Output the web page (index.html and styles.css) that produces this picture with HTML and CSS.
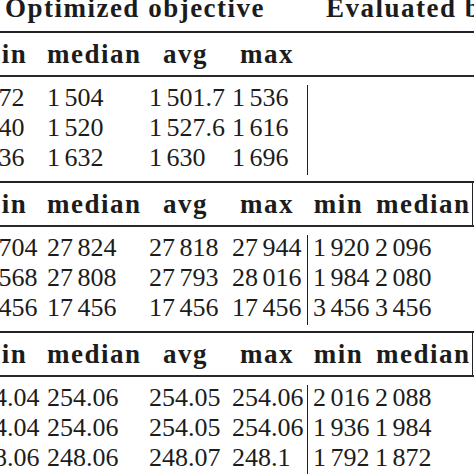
FILE: index.html
```html
<!DOCTYPE html>
<html>
<head>
<meta charset="utf-8">
<link rel="stylesheet" href="styles.css">
</head>
<body>
<div class="sheet">
  <div class="title-row">
    <div class="title left">Optimized objective</div>
    <div class="title right">Evaluated by simulation</div>
  </div>

  <div class="block">
    <div class="hdr">
      <div class="h">min</div><div class="h">median</div><div class="h">avg</div><div class="h">max</div>
      <div class="h"></div><div class="h"></div><div class="h"></div>
    </div>
    <div class="body">
      <div class="d">1 472</div><div class="d">1 504</div><div class="d">1 501.7</div><div class="d">1 536</div><div class="d sep"></div><div class="d"></div><div class="d"></div>
      <div class="d">1 440</div><div class="d">1 520</div><div class="d">1 527.6</div><div class="d">1 616</div><div class="d sep"></div><div class="d"></div><div class="d"></div>
      <div class="d">1 536</div><div class="d">1 632</div><div class="d">1 630</div><div class="d">1 696</div><div class="d sep"></div><div class="d"></div><div class="d"></div>
    </div>
  </div>

  <div class="block next">
    <div class="hdr">
      <div class="h">min</div><div class="h">median</div><div class="h">avg</div><div class="h">max</div>
      <div class="h">min</div><div class="h bar">median</div><div class="h"></div>
    </div>
    <div class="body">
      <div class="d">27 704</div><div class="d">27 824</div><div class="d">27 818</div><div class="d">27 944</div><div class="d sep">1 920</div><div class="d">2 096</div><div class="d"></div>
      <div class="d">27 568</div><div class="d">27 808</div><div class="d">27 793</div><div class="d">28 016</div><div class="d sep">1 984</div><div class="d">2 080</div><div class="d"></div>
      <div class="d">17 456</div><div class="d">17 456</div><div class="d">17 456</div><div class="d">17 456</div><div class="d sep">3 456</div><div class="d">3 456</div><div class="d"></div>
    </div>
  </div>

  <div class="block next">
    <div class="hdr">
      <div class="h">min</div><div class="h">median</div><div class="h">avg</div><div class="h">max</div>
      <div class="h">min</div><div class="h bar">median</div><div class="h"></div>
    </div>
    <div class="body">
      <div class="d">254.04</div><div class="d">254.06</div><div class="d">254.05</div><div class="d">254.06</div><div class="d sep">2 016</div><div class="d">2 088</div><div class="d"></div>
      <div class="d">254.04</div><div class="d">254.06</div><div class="d">254.05</div><div class="d">254.06</div><div class="d sep">1 936</div><div class="d">1 984</div><div class="d"></div>
      <div class="d">248.06</div><div class="d">248.06</div><div class="d">248.07</div><div class="d">248.1</div><div class="d sep">1 792</div><div class="d">1 872</div><div class="d"></div>
    </div>
  </div>
</div>
</body>
</html>
```

FILE: styles.css
```css
html, body {
  margin: 0;
  padding: 0;
  background: #ffffff;
  overflow: hidden;
}

body {
  width: 474px;
  height: 474px;
  font-family: "Liberation Serif", "Times New Roman", serif;
  color: #1c1c1c;
}

.sheet {
  width: 610px;
  margin-left: -37px;
  margin-top: -7px;
}

.title-row {
  display: grid;
  grid-template-columns: 344px 266px;
  border-bottom: 2px solid #222;
  padding-bottom: 8px;
}

.title {
  font-weight: bold;
  font-size: 27px;
  line-height: 30px;
  letter-spacing: 1.5px;
  white-space: nowrap;
}

.title.left {
  text-align: center;
}

.title.right {
  padding-left: 19px;
}

.hdr,
.body {
  display: grid;
  grid-template-columns: 79px 102px 83px 80px 63px 103px 100px;
}

.hdr {
  border-bottom: 2px solid #2a2a2a;
}

.block.next .hdr {
  border-top: 2px solid #222;
}

.h {
  box-sizing: border-box;
  padding: 6px 5px;
  font-weight: bold;
  font-size: 27px;
  line-height: 30px;
  letter-spacing: 1.5px;
  text-align: center;
  white-space: nowrap;
}

.h.bar {
  border-right: 1px solid #222;
  padding-left: 6px;
}

.body {
  padding: 8px 0 6px;
}

.d {
  box-sizing: border-box;
  padding: 0 5px 4px;
  font-size: 26px;
  line-height: 26px;
  word-spacing: -2px;
  white-space: nowrap;
}

.d.sep {
  border-left: 1px solid #222;
}
```
